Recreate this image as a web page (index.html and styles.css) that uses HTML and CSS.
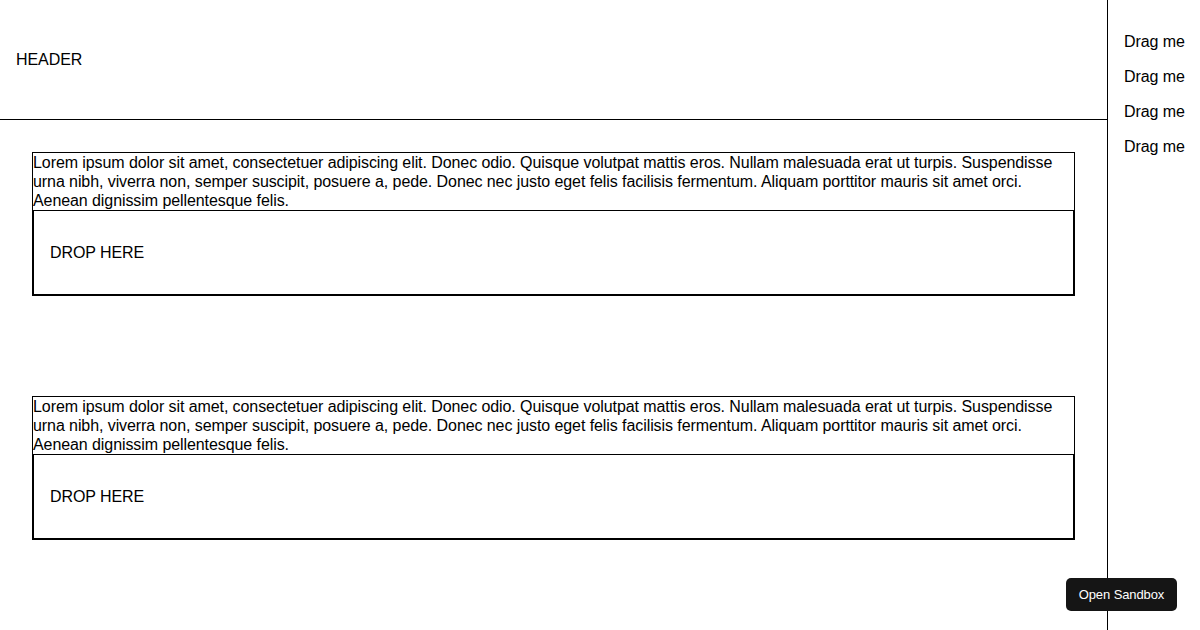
FILE: index.html
```html
<!DOCTYPE html>
<html>
<head>
<meta charset="utf-8">
<link rel="stylesheet" href="styles.css">
</head>
<body>
<div class="app">
  <div class="main">
    <header class="header">HEADER</header>
    <div class="content">
      <div class="card">
        <div class="card-text">Lorem ipsum dolor sit amet, consectetuer adipiscing elit. Donec odio. Quisque volutpat mattis eros. Nullam malesuada erat ut turpis. Suspendisse urna nibh, viverra non, semper suscipit, posuere a, pede. Donec nec justo eget felis facilisis fermentum. Aliquam porttitor mauris sit amet orci. Aenean dignissim pellentesque felis.</div>
        <div class="drop"><p>DROP HERE</p></div>
      </div>
      <div class="card">
        <div class="card-text">Lorem ipsum dolor sit amet, consectetuer adipiscing elit. Donec odio. Quisque volutpat mattis eros. Nullam malesuada erat ut turpis. Suspendisse urna nibh, viverra non, semper suscipit, posuere a, pede. Donec nec justo eget felis facilisis fermentum. Aliquam porttitor mauris sit amet orci. Aenean dignissim pellentesque felis.</div>
        <div class="drop"><p>DROP HERE</p></div>
      </div>
    </div>
  </div>
  <aside class="sidebar">
    <p class="drag">Drag me</p>
    <p class="drag">Drag me</p>
    <p class="drag">Drag me</p>
    <p class="drag">Drag me</p>
  </aside>
</div>
<button class="sandbox">Open Sandbox</button>
</body>
</html>
```
FILE: styles.css
```css
html, body {
  margin: 0;
  padding: 0;
  background: #fff;
}
body {
  font-family: "Liberation Sans", Arial, sans-serif;
  font-size: 16px;
  line-height: 19px;
  letter-spacing: -0.08px;
  color: #000;
  height: 630px;
  overflow: hidden;
}
.app {
  display: flex;
  height: 630px;
}
.main {
  width: 1107px;
  flex: none;
}
.header {
  height: 120px;
  box-sizing: border-box;
  border-bottom: 1px solid #000;
  display: flex;
  align-items: center;
  padding-left: 16px;
}
.content {
  padding: 32px;
  display: flex;
  flex-direction: column;
  gap: 100px;
}
.card {
  border: 1px solid #000;
}
.drop {
  border: 1px solid #000;
  padding: 0 16px;
}
.drop p {
  margin: 32px 0;
}
.sidebar {
  flex: 1;
  border-left: 1px solid #000;
  padding: 16px;
}
.drag {
  margin: 16px 0;
  white-space: nowrap;
}
.sandbox {
  position: fixed;
  right: 23px;
  bottom: 19px;
  width: 111px;
  height: 33px;
  background: #151515;
  color: #fff;
  border: none;
  border-radius: 5px;
  font-family: "Liberation Sans", Arial, sans-serif;
  font-size: 13px;
  letter-spacing: -0.1px;
  padding: 0;
}
```
